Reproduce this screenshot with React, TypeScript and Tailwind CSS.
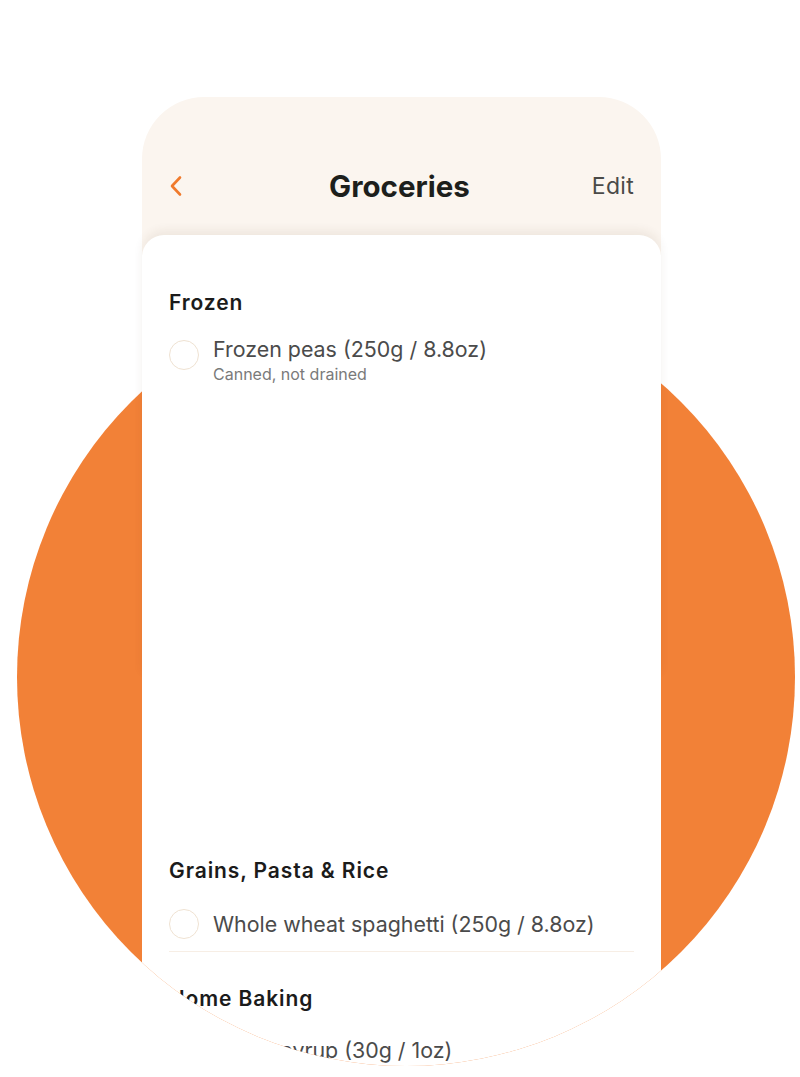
export default function App() {
  return (
    <div className="relative w-[800px] h-[1077px] overflow-hidden bg-white font-['Inter',sans-serif]">
      {/* orange backdrop */}
      <div className="absolute left-[17px] top-[288px] w-[778px] h-[778px] rounded-full bg-[#f28137]" />

      <div className="relative pt-[97px] pl-[142px]">
        <div className="w-[519px]">
          {/* Header */}
          <div className="h-[158px] rounded-t-[62px] bg-[#fbf5ef]">
            <div className="flex h-[40px] items-center justify-between pt-[69px] box-content px-[26px]">
              <svg width="14" height="22" viewBox="0 0 14 22" fill="none" className="ml-[1px]">
                <path d="M11 2.5L3 11l8 8.5" stroke="#f07a2c" strokeWidth="2.6" strokeLinecap="round" strokeLinejoin="round" />
              </svg>
              <h1 className="text-[29.5px] font-bold text-[#1d1f1c] ml-[24px]">Groceries</h1>
              <span className="text-[23px] text-[#4a4a48] tracking-[0.3px] mr-[1px]">Edit</span>
            </div>
          </div>

          {/* Card, upper half */}
          <div className="-mt-[20px] h-[442px] rounded-t-[22px] bg-white shadow-[0_-5px_10px_rgba(90,60,30,0.07)] px-[27px] pt-[56px]">
            <h2 className="text-[21px] leading-[24px] font-semibold text-[#1b1b1b] tracking-[0.9px]">Frozen</h2>
            <div className="mt-[21px] flex items-start gap-[14px]">
              <div className="mt-[4px] h-[30px] w-[30px] shrink-0 rounded-full border-[1.5px] border-[#efe2d2]" />
              <div>
                <div className="text-[21.4px] leading-[26px] text-[#4b4b4b]">Frozen peas (250g / 8.8oz)</div>
                <div className="mt-[2px] text-[16px] leading-[20px] text-[#7a7a7a]">Canned, not drained</div>
              </div>
            </div>
          </div>

          {/* Card, lower half clipped by the circle */}
          <div className="-ml-[125px] w-[778px] h-[389px] rounded-b-[389px] overflow-hidden">
            <div className="ml-[125px] w-[519px] h-full bg-white px-[27px] pt-[182px]">
              <h2 className="text-[21px] leading-[24px] font-semibold text-[#1b1b1b] tracking-[0.9px]">Grains, Pasta &amp; Rice</h2>
              <div className="mt-[26px] flex items-center gap-[14px] pb-[12px] border-b border-[#f7eee5]">
                <div className="h-[30px] w-[30px] shrink-0 rounded-full border-[1.5px] border-[#efe2d2]" />
                <div className="text-[21.4px] leading-[26px] text-[#4b4b4b]">Whole wheat spaghetti (250g / 8.8oz)</div>
              </div>
              <h2 className="mt-[35px] text-[21px] leading-[24px] font-semibold text-[#1b1b1b] tracking-[0.9px]">Home Baking</h2>
              <div className="mt-[24px] flex items-center gap-[14px]">
                <div className="h-[30px] w-[30px] shrink-0 rounded-full border-[1.5px] border-[#efe2d2]" />
                <div className="text-[21.4px] leading-[26px] text-[#4b4b4b]">Maple syrup (30g / 1oz)</div>
              </div>
            </div>
          </div>
        </div>
      </div>
    </div>
  );
}
